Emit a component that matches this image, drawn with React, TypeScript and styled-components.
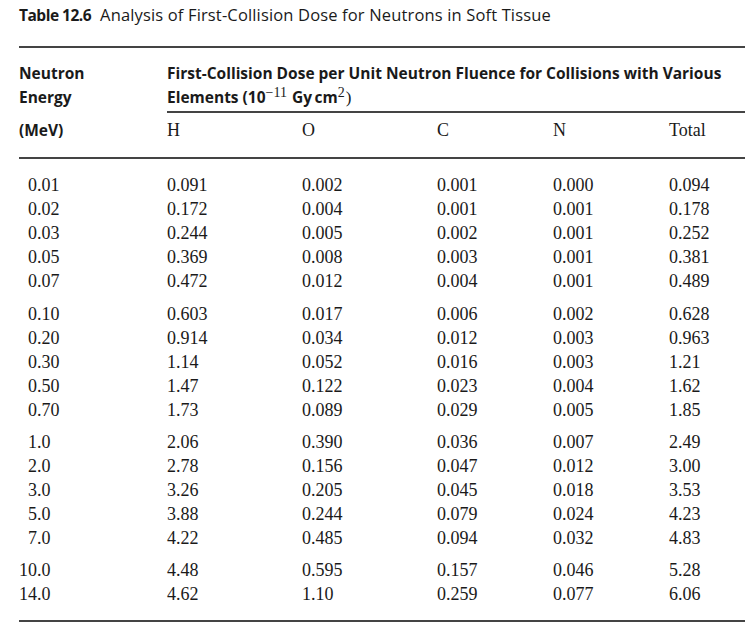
import React from 'react';
import styled, { createGlobalStyle } from 'styled-components';

const GlobalStyle = createGlobalStyle`
  html, body {
    margin: 0;
    padding: 0;
    background: #ffffff;
  }
`;

const COLS = '148px 135px 135px 116px 116px 1fr';
const SANS = `"Open Sans", "Noto Sans", sans-serif`;
const SERIF = `"Liberation Serif", "Times New Roman", serif`;

const Page = styled.div`
  width: 726px;
  padding-left: 19px;
  color: #1a1a1a;
`;

const Caption = styled.div`
  font-family: ${SANS};
  font-size: 16.5px;
  letter-spacing: 0.15px;
  line-height: 30px;
  height: 30px;
  white-space: nowrap;
`;

const CaptionLabel = styled.span`
  font-weight: 700;
  font-size: 15.5px;
  letter-spacing: -0.5px;
  margin-right: 9px;
`;

const Rule = styled.div<{ $top?: number }>`
  height: 2px;
  background: #444;
  margin-top: ${(p) => p.$top ?? 0}px;
`;

const Row = styled.div`
  display: grid;
  grid-template-columns: ${COLS};
`;

const HeadTop = styled(Row)`
  padding-top: 13px;
  font-family: ${SANS};
  font-weight: 700;
  font-size: 15.5px;
  line-height: 24px;
  white-space: nowrap;
`;

const Spanner = styled.div`
  grid-column: 2 / -1;
  border-bottom: 2px solid #444;
  padding-bottom: 1px;
`;

const Sup = styled.sup`
  font-family: ${SERIF};
  font-weight: 400;
  font-size: 14px;
  line-height: 0;
  vertical-align: 6px;
  margin-right: 1px;
`;

const ThinParen = styled.span`
  font-family: ${SERIF};
  font-weight: 400;
  font-size: 17px;
`;

const HeadSub = styled(Row)`
  padding: 5px 0 15px;
  line-height: 24px;
`;

const UnitCell = styled.div`
  font-family: ${SANS};
  font-weight: 700;
  font-size: 15.5px;
`;

const ColName = styled.div`
  font-family: ${SERIF};
  font-size: 18px;
`;

const Group = styled.div<{ $gap: number; $last?: boolean }>`
  padding-top: ${(p) => p.$gap}px;
  padding-bottom: ${(p) => (p.$last ? 14 : 0)}px;
`;

const DataRow = styled(Row)`
  font-family: ${SERIF};
  font-size: 18px;
  line-height: 24px;
  height: 24px;
`;

const Energy = styled.div`
  display: flex;
`;

const IntPart = styled.span`
  width: 18px;
  text-align: right;
`;

const groups: string[][][] = [
  [
    ['0.01', '0.091', '0.002', '0.001', '0.000', '0.094'],
    ['0.02', '0.172', '0.004', '0.001', '0.001', '0.178'],
    ['0.03', '0.244', '0.005', '0.002', '0.001', '0.252'],
    ['0.05', '0.369', '0.008', '0.003', '0.001', '0.381'],
    ['0.07', '0.472', '0.012', '0.004', '0.001', '0.489'],
  ],
  [
    ['0.10', '0.603', '0.017', '0.006', '0.002', '0.628'],
    ['0.20', '0.914', '0.034', '0.012', '0.003', '0.963'],
    ['0.30', '1.14', '0.052', '0.016', '0.003', '1.21'],
    ['0.50', '1.47', '0.122', '0.023', '0.004', '1.62'],
    ['0.70', '1.73', '0.089', '0.029', '0.005', '1.85'],
  ],
  [
    ['1.0', '2.06', '0.390', '0.036', '0.007', '2.49'],
    ['2.0', '2.78', '0.156', '0.047', '0.012', '3.00'],
    ['3.0', '3.26', '0.205', '0.045', '0.018', '3.53'],
    ['5.0', '3.88', '0.244', '0.079', '0.024', '4.23'],
    ['7.0', '4.22', '0.485', '0.094', '0.032', '4.83'],
  ],
  [
    ['10.0', '4.48', '0.595', '0.157', '0.046', '5.28'],
    ['14.0', '4.62', '1.10', '0.259', '0.077', '6.06'],
  ],
];

const gaps = [14, 9, 8, 8];

const EnergyValue: React.FC<{ value: string }> = ({ value }) => {
  const [int, frac] = value.split('.');
  return (
    <Energy>
      <IntPart>{int}</IntPart>
      <span>.{frac}</span>
    </Energy>
  );
};

const App: React.FC = () => {
  return (
    <Page>
      <GlobalStyle />
      <Caption>
        <CaptionLabel>Table 12.6</CaptionLabel>
        Analysis of First-Collision Dose for Neutrons in Soft Tissue
      </Caption>
      <Rule $top={16} />

      <HeadTop>
        <div>
          Neutron
          <br />
          Energy
        </div>
        <Spanner>
          First-Collision Dose per Unit Neutron Fluence for Collisions with Various
          <br />
          Elements (10<Sup>−11</Sup> Gy&thinsp;cm<Sup>2</Sup>
          <ThinParen>)</ThinParen>
        </Spanner>
      </HeadTop>

      <HeadSub>
        <UnitCell>(MeV)</UnitCell>
        <ColName>H</ColName>
        <ColName>O</ColName>
        <ColName>C</ColName>
        <ColName>N</ColName>
        <ColName>Total</ColName>
      </HeadSub>
      <Rule />

      {groups.map((rows, gi) => (
        <Group key={gi} $gap={gaps[gi]} $last={gi === groups.length - 1}>
          {rows.map((row) => (
            <DataRow key={row[0]}>
              <EnergyValue value={row[0]} />
              {row.slice(1).map((v, i) => (
                <div key={i}>{v}</div>
              ))}
            </DataRow>
          ))}
        </Group>
      ))}
      <Rule />
    </Page>
  );
};

export default App;
